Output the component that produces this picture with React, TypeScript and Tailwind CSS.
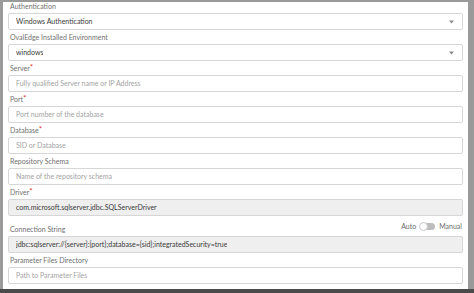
import { ReactNode } from 'react'

const font = { fontFamily: 'Lato, "Open Sans", sans-serif' }

function Label({ text, required }: { text: string; required?: boolean }) {
  return (
    <div className="text-[7px] leading-[9px] text-[#707070] pl-[2px]">
      {text}
      {required && <span className="text-[#e0302c] text-[8px] leading-none align-top relative -top-[1px]">*</span>}
    </div>
  )
}

function Box({ children, gray, arrow }: { children: ReactNode; gray?: boolean; arrow?: boolean }) {
  return (
    <div
      className={`mt-[2px] h-[17px] border border-[#d6d6d6] rounded-[2px] flex items-center justify-between pl-[7px] pr-[8px] text-[7px] ${
        gray ? 'bg-[#efefef]' : 'bg-white'
      }`}
    >
      <span className="truncate">{children}</span>
      {arrow && (
        <svg width="5" height="4" viewBox="0 0 5 4">
          <path d="M0 0.5 L5 0.5 L2.5 3.5 Z" fill="#8a8a8a" />
        </svg>
      )}
    </div>
  )
}

const Value = ({ t }: { t: string }) => <span className="text-[#3a3a3a]">{t}</span>
const Hint = ({ t }: { t: string }) => <span className="text-[#a3a3a3]">{t}</span>

export default function App() {
  return (
    <div className="w-[474px] h-[293px] bg-[#9a9a9a] flex flex-col" style={font}>
      <div className="flex-1 flex pt-[2px] pl-[3px] pr-[6px]">
        <div className="flex-1 bg-white px-[5px] flex flex-col gap-[3px]">
          <div>
            <Label text="Authentication" />
            <Box arrow>
              <Value t="Windows Authentication" />
            </Box>
          </div>
          <div>
            <Label text="OvalEdge Installed Environment" />
            <Box arrow>
              <Value t="windows" />
            </Box>
          </div>
          <div>
            <Label text="Server" required />
            <Box>
              <Hint t="Fully qualified Server name or IP Address" />
            </Box>
          </div>
          <div>
            <Label text="Port" required />
            <Box>
              <Hint t="Port number of the database" />
            </Box>
          </div>
          <div>
            <Label text="Database" required />
            <Box>
              <Hint t="SID or Database" />
            </Box>
          </div>
          <div>
            <Label text="Repository Schema" />
            <Box>
              <Hint t="Name of the repository schema" />
            </Box>
          </div>
          <div>
            <Label text="Driver" required />
            <Box gray>
              <Value t="com.microsoft.sqlserver.jdbc.SQLServerDriver" />
            </Box>
          </div>
          <div>
            <div className="flex items-end justify-between h-[15px]">
              <Label text="Connection String" />
              <div className="flex items-center gap-[4px] text-[7px] text-[#6b6b6b] self-start mt-[2px] pr-[1px]">
                <span>Auto</span>
                <div className="relative w-[15px] h-[7px] rounded-full bg-[#bdbdbd]">
                  <div className="absolute -left-[1px] -top-[1px] w-[9px] h-[9px] rounded-full bg-white border border-[#c8c8c8]" />
                </div>
                <span>Manual</span>
              </div>
            </div>
            <Box gray>
              <Value t="jdbc:sqlserver://{server}:{port};database={sid};integratedSecurity=true" />
            </Box>
          </div>
          <div>
            <Label text="Parameter Files Directory" />
            <Box>
              <Hint t="Path to Parameter Files" />
            </Box>
          </div>
        </div>
      </div>
      <div className="h-[4px] bg-[#4a4a4a]" />
    </div>
  )
}
